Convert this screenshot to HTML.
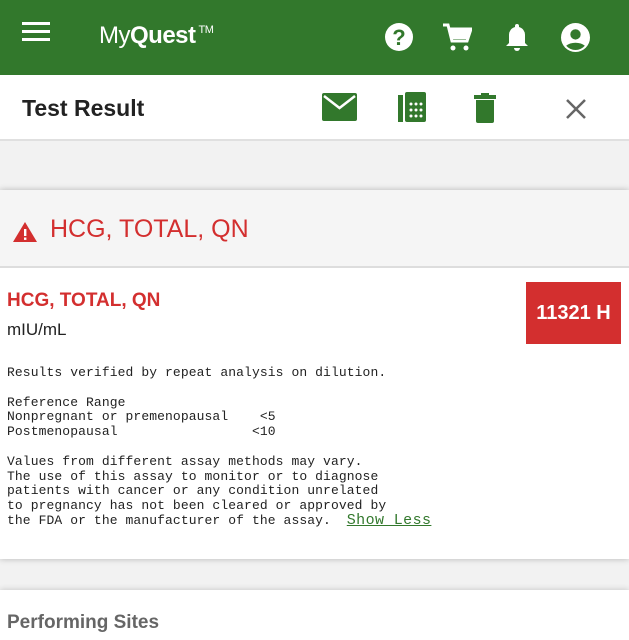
<!DOCTYPE html>
<html><head><style>
body{margin:0;width:629px;height:640px;overflow:hidden;background:#f2f2f2;font-family:"Liberation Sans",sans-serif;position:relative}
.hdr{position:absolute;left:0;top:0;width:629px;height:75px;background:#32782c}
.tb{position:absolute;left:0;top:75px;width:629px;height:64px;background:#fff;border-bottom:2px solid #e0e0e0}
.card{position:absolute;left:0;top:190px;width:629px;height:369px;background:#fff;box-shadow:0 0 6px rgba(0,0,0,.25)}
.ch{height:76px;background:#f5f5f5;border-bottom:2px solid #ddd;position:relative}
pre{position:absolute;left:7px;top:176px;margin:0;font-family:"Liberation Mono",monospace;font-size:13px;line-height:14.8px;letter-spacing:0.1px;color:#222}
.ps{position:absolute;left:0;top:590px;width:629px;height:50px;background:#fff;box-shadow:0 0 6px rgba(0,0,0,.2)}
</style></head><body>
<div class="hdr">
<svg style="position:absolute;left:22px;top:22px" width="28" height="20"><rect y="0" width="28" height="3" fill="#fff"/><rect y="8" width="28" height="3" fill="#fff"/><rect y="16" width="28" height="3" fill="#fff"/></svg>
<div style="position:absolute;left:99px;top:22px;color:#fff;font-size:24px;letter-spacing:-0.5px">My<b>Quest</b><sup style="font-size:11px;vertical-align:top;position:relative;top:2px;margin-left:3px">TM</sup></div>
<svg style="position:absolute;left:385px;top:23px" width="28" height="28" viewBox="0 0 28 28"><circle cx="14" cy="14" r="14" fill="#fff"/><text x="14" y="22" text-anchor="middle" font-family="Liberation Sans" font-weight="bold" font-size="22" fill="#32782c">?</text></svg>
<svg style="position:absolute;left:442px;top:23px" width="30" height="28" viewBox="0 0 30 28"><path d="M1 2h5l4 16h15l4-12H8" fill="none" stroke="#fff" stroke-width="3"/><path d="M8 6h20l-3 10H10z" fill="#fff"/><circle cx="11" cy="25" r="2.5" fill="#fff"/><circle cx="24" cy="25" r="2.5" fill="#fff"/></svg>
<svg style="position:absolute;left:504px;top:23px" width="26" height="28" viewBox="0 0 26 28"><path d="M13 1a2 2 0 0 1 2 2v1a8 8 0 0 1 6 8v8l3 3H2l3-3v-8a8 8 0 0 1 6-8V3a2 2 0 0 1 2-2z" fill="#fff"/><path d="M10 25h6a3 3 0 0 1-6 0z" fill="#fff"/></svg>
<svg style="position:absolute;left:561px;top:23px" width="29" height="29" viewBox="0 0 28 28"><circle cx="14" cy="14" r="14" fill="#fff"/><circle cx="14" cy="11" r="5" fill="#32782c"/><path d="M5 22a11 7 0 0 1 18 0a12 12 0 0 1-18 0z" fill="#32782c"/></svg>
</div>
<div class="tb">
<div style="position:absolute;left:22px;top:20px;font-size:23px;font-weight:bold;color:#222">Test Result</div>
<svg style="position:absolute;left:322px;top:18px" width="35" height="28" viewBox="0 0 35 28"><rect width="35" height="28" rx="2" fill="#32782c"/><path d="M2 3l15.5 12L33 3" fill="none" stroke="#fff" stroke-width="2.5"/></svg>
<svg style="position:absolute;left:398px;top:17px" width="28" height="30" viewBox="0 0 28 30"><rect x="0" y="3" width="5" height="27" fill="#32782c"/><rect x="7" y="0" width="21" height="30" rx="2" fill="#32782c"/><g fill="#fff"><circle cx="13" cy="12" r="1.5"/><circle cx="18" cy="12" r="1.5"/><circle cx="23" cy="12" r="1.5"/><circle cx="13" cy="18" r="1.5"/><circle cx="18" cy="18" r="1.5"/><circle cx="23" cy="18" r="1.5"/><circle cx="13" cy="24" r="1.5"/><circle cx="18" cy="24" r="1.5"/><circle cx="23" cy="24" r="1.5"/></g></svg>
<svg style="position:absolute;left:474px;top:18px" width="22" height="30" viewBox="0 0 22 30"><rect x="0" y="2" width="22" height="4" fill="#32782c"/><rect x="7" y="0" width="8" height="3" fill="#32782c"/><path d="M2 7h18v21a2 2 0 0 1-2 2H4a2 2 0 0 1-2-2z" fill="#32782c"/></svg>
<svg style="position:absolute;left:565px;top:23px" width="22" height="22" viewBox="0 0 22 22"><path d="M2 2l18 18M20 2L2 20" stroke="#666" stroke-width="2.5"/></svg>
</div>
<div class="card">
<div class="ch">
<svg style="position:absolute;left:13px;top:32px" width="24" height="20" viewBox="0 0 24 20"><path d="M12 0L24 20H0z" fill="#d32f2f"/><rect x="11" y="7" width="2.4" height="7" fill="#fff"/><rect x="11" y="15.5" width="2.4" height="2.4" fill="#fff"/></svg>
<div style="position:absolute;left:50px;top:25px;font-size:25px;color:#d32f2f">HCG, TOTAL, QN</div>
</div>
<div style="position:absolute;left:7px;top:100px;font-size:19px;font-weight:bold;color:#d32f2f">HCG, TOTAL, QN</div>
<div style="position:absolute;left:7px;top:130px;font-size:17px;color:#222">mIU/mL</div>
<div style="position:absolute;left:526px;top:92px;width:95px;height:62px;background:#d32f2f;color:#fff;font-weight:bold;font-size:20px;line-height:62px;text-align:center">11321 H</div>
<pre>Results verified by repeat analysis on dilution.

Reference Range
Nonpregnant or premenopausal    &lt;5
Postmenopausal                 &lt;10

Values from different assay methods may vary.
The use of this assay to monitor or to diagnose
patients with cancer or any condition unrelated
to pregnancy has not been cleared or approved by
the FDA or the manufacturer of the assay.  <span style="color:#32782c;text-decoration:underline;font-size:15px;letter-spacing:0.4px">Show Less</span></pre>
</div>
<div class="ps"><div style="position:absolute;left:7px;top:22px;font-size:19px;font-weight:bold;color:#666">Performing Sites</div></div>
</body></html>
